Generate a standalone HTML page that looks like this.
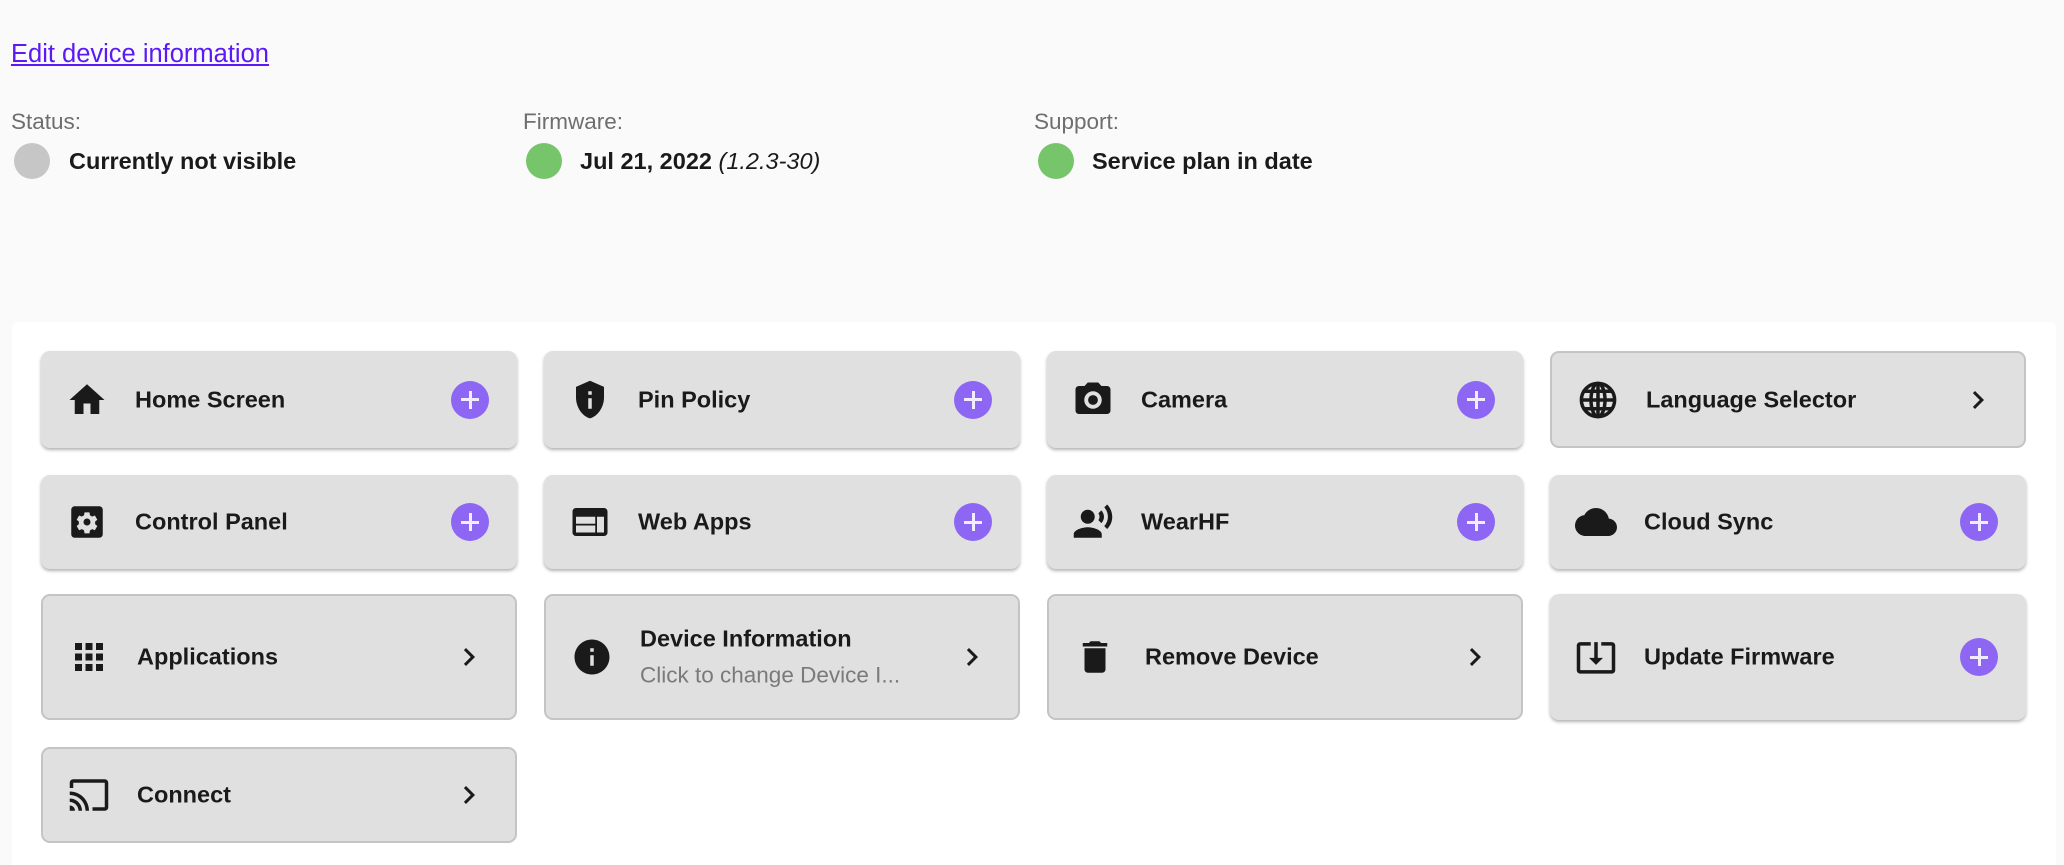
<!DOCTYPE html>
<html><head><meta charset="utf-8"><style>
html,body{margin:0;width:2064px;height:865px;overflow:hidden}
body{background:#fafafa;font-family:"Liberation Sans",Arial,sans-serif;position:relative}
a{position:absolute;left:11px;top:40px;font-size:25.5px;color:#5a19f5;text-decoration:underline}
.lbl{position:absolute;top:109px;font-size:22.5px;color:#6e6e6e}
.dot{position:absolute;top:143px;width:36px;height:36px;border-radius:50%}
.val{position:absolute;top:148px;font-size:23.5px;font-weight:bold;color:#1a1a1a}
.val i{font-weight:normal}
.panel{position:absolute;left:12px;top:322px;width:2044px;height:543px;background:#fff;border-radius:6px 6px 0 0}
.t{position:absolute;width:476px;background:#e0e0e0;border-radius:9px;box-sizing:border-box;box-shadow:0 2px 3px rgba(0,0,0,.3)}
.t.o{box-shadow:none;border:2px solid #c4c4c4}
.t svg.ic{position:absolute;left:25px;top:50%;margin-top:-21px;width:42px;height:42px;fill:#1a1a1a}
.t .tx{position:absolute;left:94px;top:50%;transform:translateY(-50%);font-size:23.5px;font-weight:bold;color:#1a1a1a;white-space:nowrap}
.t .tx small{display:block;font-size:22.5px;font-weight:normal;color:#7a7a7a;margin-top:10px}
.plus{position:absolute;right:28px;top:50%;margin-top:-19px;width:38px;height:38px;border-radius:50%;background:#8d66f3}
.plus:before,.plus:after{content:"";position:absolute;background:#f2ecff;left:17.5px;top:10px;width:3px;height:18px}
.plus:after{left:10px;top:17.5px;width:18px;height:3px}
.chev{position:absolute;right:28px;top:50%;margin-top:-18px;width:36px;height:36px;fill:#1a1a1a}
</style></head><body>
<a>Edit device information</a>
<div class="lbl" style="left:11px">Status:</div>
<div class="lbl" style="left:523px">Firmware:</div>
<div class="lbl" style="left:1034px">Support:</div>
<div class="dot" style="left:14px;background:#c6c6c6"></div>
<div class="dot" style="left:526px;background:#77c56a"></div>
<div class="dot" style="left:1038px;background:#77c56a"></div>
<div class="val" style="left:69px">Currently not visible</div>
<div class="val" style="left:580px">Jul 21, 2022 <i>(1.2.3-30)</i></div>
<div class="val" style="left:1092px">Service plan in date</div>
<div class="panel"></div>

<div class="t" style="left:41px;top:351px;height:97px"><svg class="ic" viewBox="0 0 24 24"><path d="M10 20v-6h4v6h5v-8h3L12 3 2 12h3v8z"/></svg><div class="tx">Home Screen</div><div class="plus"></div></div>
<div class="t" style="left:544px;top:351px;height:97px"><svg class="ic" viewBox="0 0 24 24"><path d="M12 1L4 4.5v6c0 5.5 3.4 10.7 8 12 4.6-1.3 8-6.5 8-12v-6L12 1zm1 16h-2v-6h2v6zm0-8h-2V7h2v2z"/></svg><div class="tx">Pin Policy</div><div class="plus"></div></div>
<div class="t" style="left:1047px;top:351px;height:97px"><svg class="ic" viewBox="0 0 24 24"><path fill-rule="evenodd" d="M9 2L7.17 4H4c-1.1 0-2 .9-2 2v12c0 1.1.9 2 2 2h16c1.1 0 2-.9 2-2V6c0-1.1-.9-2-2-2h-3.17L15 2H9zm3 15c-2.76 0-5-2.24-5-5s2.24-5 5-5 5 2.24 5 5-2.24 5-5 5zm0-2.2a2.8 2.8 0 1 0 0-5.6 2.8 2.8 0 0 0 0 5.6z"/></svg><div class="tx">Camera</div><div class="plus"></div></div>
<div class="t o" style="left:1550px;top:351px;height:97px"><svg class="ic" viewBox="0 0 24 24" style="fill:none;stroke:#1a1a1a;stroke-width:2"><circle cx="12" cy="12" r="9.5"/><ellipse cx="12" cy="12" rx="4" ry="9.5"/><path d="M2.5 12h19M12 2.5v19M4 7h16M4 17h16"/></svg><div class="tx">Language Selector</div><svg class="chev" viewBox="0 0 24 24"><path d="M10 6L8.59 7.41 13.17 12l-4.58 4.59L10 18l6-6z"/></svg></div>

<div class="t" style="left:41px;top:475px;height:94px"><svg class="ic" viewBox="0 0 24 24"><path fill-rule="evenodd" d="M5 3h14c1.1 0 2 .9 2 2v14c0 1.1-.9 2-2 2H5c-1.1 0-2-.9-2-2V5c0-1.1.9-2 2-2zm5.6 3.5l-.3 1.7c-.5.2-.9.4-1.2.7l-1.6-.6-1.4 2.4 1.3 1.1c-.1.5-.1.9 0 1.4l-1.3 1.1 1.4 2.4 1.6-.6c.4.3.8.5 1.2.7l.3 1.7h2.8l.3-1.7c.5-.2.9-.4 1.2-.7l1.6.6 1.4-2.4-1.3-1.1c.1-.5.1-.9 0-1.4l1.3-1.1-1.4-2.4-1.6.6c-.4-.3-.8-.5-1.2-.7l-.3-1.7h-2.8zM12 10a2 2 0 1 1 0 4 2 2 0 0 1 0-4z"/></svg><div class="tx">Control Panel</div><div class="plus"></div></div>
<div class="t" style="left:544px;top:475px;height:94px"><svg class="ic" viewBox="0 0 24 24"><path d="M20 4H4c-1.1 0-1.99.9-1.99 2L2 18c0 1.1.9 2 2 2h16c1.1 0 2-.9 2-2V6c0-1.1-.9-2-2-2zm-5 14H4v-4h11v4zm0-5H4V9h11v4zm5 5h-4V9h4v9z"/></svg><div class="tx">Web Apps</div><div class="plus"></div></div>
<div class="t" style="left:1047px;top:475px;height:94px"><svg class="ic" viewBox="0 0 24 24"><path d="M9 13c2.21 0 4-1.79 4-4s-1.79-4-4-4-4 1.79-4 4 1.79 4 4 4zm0 2c-2.67 0-8 1.34-8 4v2h16v-2c0-2.66-5.33-4-8-4zm7.76-9.64l-1.68 1.690c.84 1.18.84 2.71 0 3.89l1.68 1.69c2.02-2.02 2.02-5.07 0-7.27zM20.07 2l-1.63 1.63c2.77 3.02 2.77 7.56 0 10.74L20.07 16c3.9-3.89 3.91-9.950 0-14z"/></svg><div class="tx">WearHF</div><div class="plus"></div></div>
<div class="t" style="left:1550px;top:475px;height:94px"><svg class="ic" viewBox="0 0 24 24"><path d="M19.35 10.04C18.67 6.59 15.64 4 12 4 9.11 4 6.6 5.64 5.35 8.04 2.34 8.36 0 10.91 0 14c0 3.31 2.69 6 6 6h13c2.76 0 5-2.24 5-5 0-2.64-2.05-4.78-4.65-4.96z"/></svg><div class="tx">Cloud Sync</div><div class="plus"></div></div>

<div class="t o" style="left:41px;top:594px;height:126px"><svg class="ic" viewBox="0 0 24 24"><path d="M4 8h4V4H4v4zm6 12h4v-4h-4v4zm-6 0h4v-4H4v4zm0-6h4v-4H4v4zm6 0h4v-4h-4v4zm6-10v4h4V4h-4zm-6 4h4V4h-4v4zm6 6h4v-4h-4v4zm0 6h4v-4h-4v4z"/></svg><div class="tx">Applications</div><svg class="chev" viewBox="0 0 24 24"><path d="M10 6L8.59 7.41 13.17 12l-4.58 4.59L10 18l6-6z"/></svg></div>
<div class="t o" style="left:544px;top:594px;height:126px"><svg class="ic" viewBox="0 0 24 24"><path d="M12 2C6.48 2 2 6.48 2 12s4.48 10 10 10 10-4.48 10-10S17.52 2 12 2zm1 15h-2v-6h2v6zm0-8h-2V7h2v2z"/></svg><div class="tx">Device Information<small>Click to change Device I...</small></div><svg class="chev" viewBox="0 0 24 24"><path d="M10 6L8.59 7.41 13.17 12l-4.58 4.59L10 18l6-6z"/></svg></div>
<div class="t o" style="left:1047px;top:594px;height:126px"><svg class="ic" viewBox="0 0 24 24"><path d="M6 19c0 1.1.9 2 2 2h8c1.1 0 2-.9 2-2V7H6v12zM19 4h-3.5l-1-1h-5l-1 1H5v2h14V4z"/></svg><div class="tx" style="left:96px">Remove Device</div><svg class="chev" viewBox="0 0 24 24"><path d="M10 6L8.59 7.41 13.17 12l-4.58 4.59L10 18l6-6z"/></svg></div>
<div class="t" style="left:1550px;top:594px;height:126px"><svg class="ic" viewBox="0 0 24 24"><path d="M12 16.5l4-4h-3v-9h-2v9H8l4 4zm9-13h-6v1.99h6v14.03H3V5.49h6V3.5H3c-1.1 0-2 .9-2 2v14c0 1.1.9 2 2 2h18c1.1 0 2-.9 2-2v-14c0-1.1-.9-2-2-2z"/></svg><div class="tx">Update Firmware</div><div class="plus"></div></div>

<div class="t o" style="left:41px;top:747px;height:96px"><svg class="ic" viewBox="0 0 24 24"><path d="M21 3H3c-1.1 0-2 .9-2 2v3h2V5h18v14h-7v2h7c1.1 0 2-.9 2-2V5c0-1.1-.9-2-2-2zM1 18v3h3c0-1.66-1.34-3-3-3zm0-4v2c2.76 0 5 2.24 5 5h2c0-3.87-3.13-7-7-7zm0-4v2c4.97 0 9 4.03 9 9h2c0-6.08-4.93-11-11-11z"/></svg><div class="tx">Connect</div><svg class="chev" viewBox="0 0 24 24"><path d="M10 6L8.59 7.41 13.17 12l-4.58 4.59L10 18l6-6z"/></svg></div>
</body></html>
